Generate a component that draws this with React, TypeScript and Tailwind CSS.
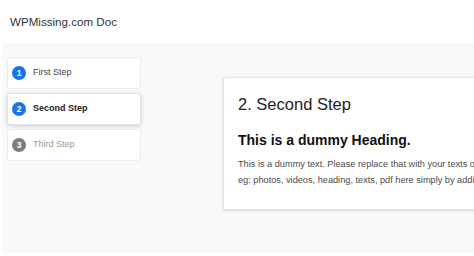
import React from 'react';

const steps = [
  { n: 1, title: 'First Step', state: 'done' },
  { n: 2, title: 'Second Step', state: 'active' },
  { n: 3, title: 'Third Step', state: 'todo' },
];

export default function App() {
  return (
    <div className="w-[474px] h-[256px] overflow-hidden bg-white font-['Liberation_Sans',Arial,sans-serif]">
      {/* Header */}
      <div className="h-[43px] flex items-center pl-[10px]">
        <span className="text-[11.6px] text-[#333]">WPMissing.com Doc</span>
      </div>

      {/* Panel */}
      <div className="ml-[2px] h-[210px] bg-[#f8f9fb] rounded-bl-[3px] flex pt-[14px]">
        {/* Steps */}
        <div className="w-[134px] ml-[5px] flex flex-col gap-[4px] shrink-0">
          {steps.map((s) => (
            <div
              key={s.n}
              className={`h-[32px] flex items-center pl-[4px] gap-[7px] bg-white rounded-[3px] border ${
                s.state === 'active'
                  ? 'border-[#e3e3e3] shadow-[0_1px_4px_rgba(0,0,0,0.18)]'
                  : 'border-[#ececec]'
              }`}
            >
              <span
                className={`w-[14px] h-[14px] rounded-full flex items-center justify-center text-[8.5px] font-bold text-white ${
                  s.state === 'todo' ? 'bg-[#7d7d7d]' : 'bg-[#1a73e8]'
                }`}
              >
                {s.n}
              </span>
              <span
                className={`text-[9px] ${
                  s.state === 'active'
                    ? 'font-bold text-[#222]'
                    : s.state === 'todo'
                    ? 'text-[#9a9a9a]'
                    : 'text-[#444]'
                }`}
              >
                {s.title}
              </span>
            </div>
          ))}
        </div>

        {/* Content card */}
        <div className="ml-[82px] mt-[20px] w-[320px] h-[133px] shrink-0 bg-white border border-[#e6e6e6] rounded-[2px] shadow-[0_1px_3px_rgba(0,0,0,0.15)] pl-[14px] pt-[16px]">
          <h2 className="text-[16.5px] leading-[20px] text-[#222]">2. Second Step</h2>
          <h3 className="mt-[17px] text-[14px] leading-[18px] font-bold text-[#111]">
            This is a dummy Heading.
          </h3>
          <p className="mt-[7px] text-[9.2px] leading-[16px] text-[#4a4a4a] whitespace-nowrap">
            This is a dummy text. Please replace that with your texts or content.
            <br />
            eg: photos, videos, heading, texts, pdf here simply by adding blocks.
          </p>
        </div>
      </div>
    </div>
  );
}
